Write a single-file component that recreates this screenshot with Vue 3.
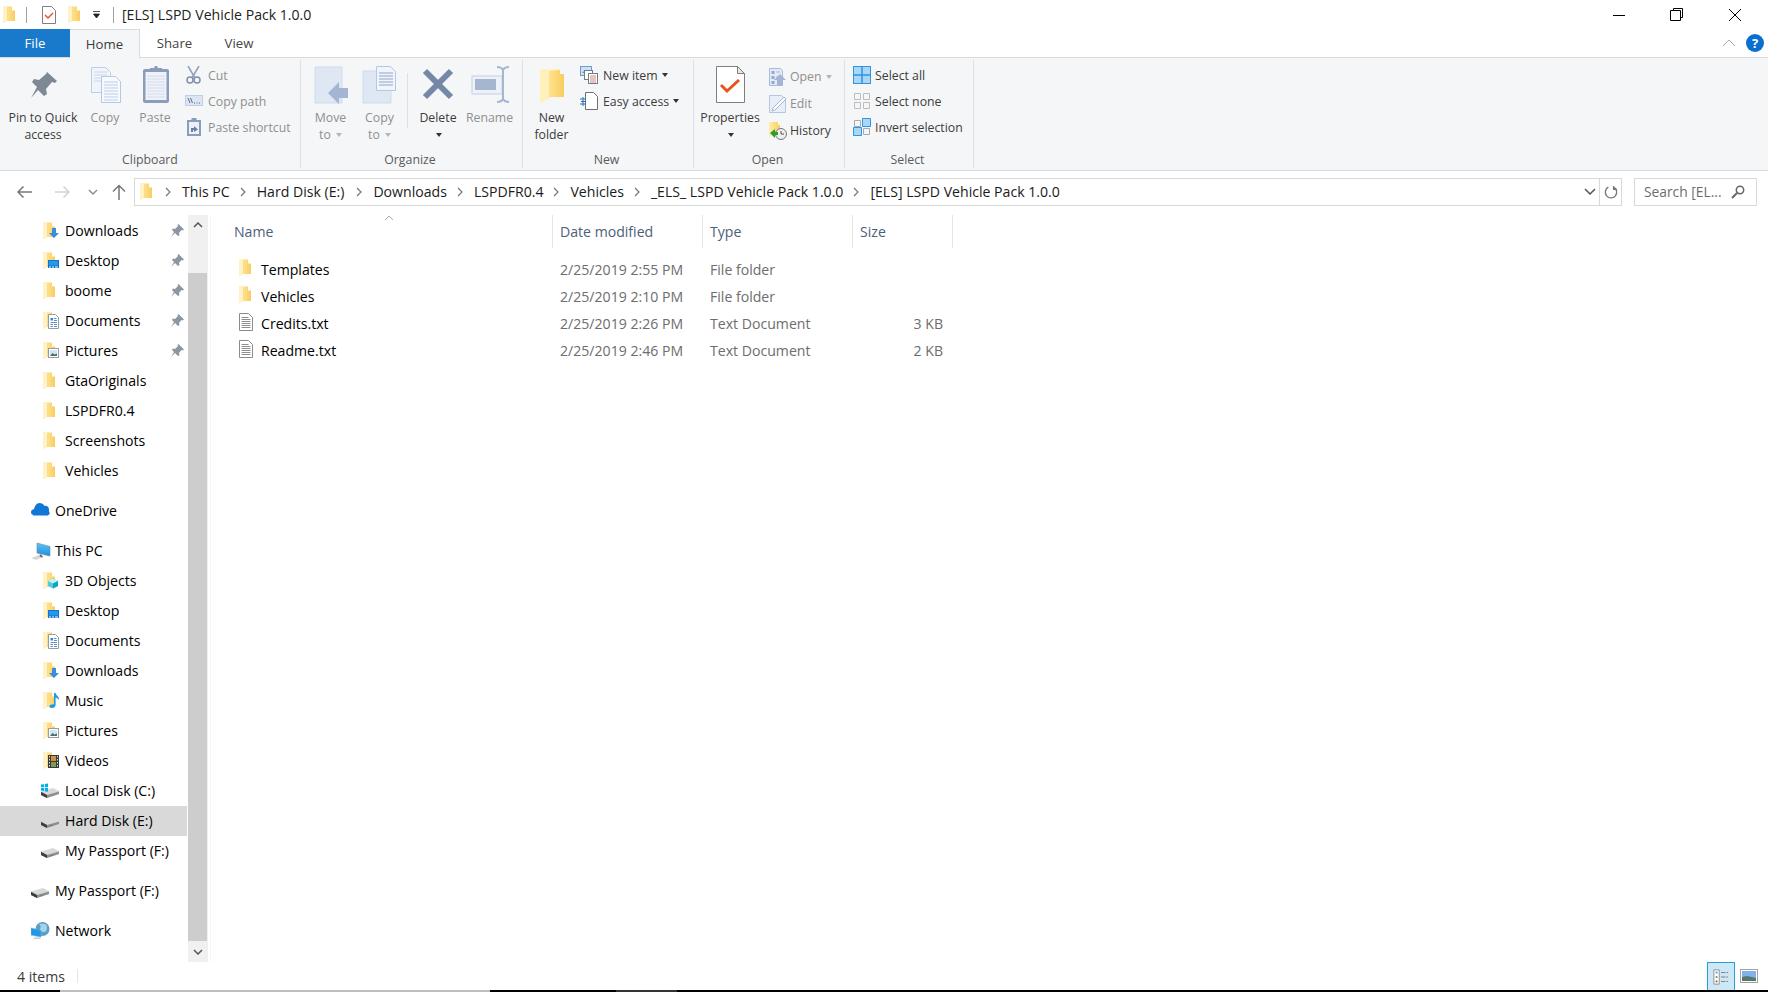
<script setup>
const crumbs = ['This PC', 'Hard Disk (E:)', 'Downloads', 'LSPDFR0.4', 'Vehicles', '_ELS_ LSPD Vehicle Pack 1.0.0', '[ELS] LSPD Vehicle Pack 1.0.0']

const navGroups = [
  {
    items: [
      { name: 'Downloads', over: 'ov-down', pin: true, child: true },
      { name: 'Desktop', over: 'ov-desk', pin: true, child: true },
      { name: 'boome', pin: true, child: true },
      { name: 'Documents', over: 'ov-docs', pin: true, child: true },
      { name: 'Pictures', over: 'ov-pics', pin: true, child: true },
      { name: 'GtaOriginals', child: true },
      { name: 'LSPDFR0.4', child: true },
      { name: 'Screenshots', child: true },
      { name: 'Vehicles', child: true },
    ],
  },
  { items: [{ name: 'OneDrive', icon: 'i-cloud' }] },
  {
    items: [
      { name: 'This PC', icon: 'i-pc' },
      { name: '3D Objects', over: 'ov-3d', child: true },
      { name: 'Desktop', over: 'ov-desk', child: true },
      { name: 'Documents', over: 'ov-docs', child: true },
      { name: 'Downloads', over: 'ov-down', child: true },
      { name: 'Music', over: 'ov-music', child: true },
      { name: 'Pictures', over: 'ov-pics', child: true },
      { name: 'Videos', over: 'ov-video', child: true },
      { name: 'Local Disk (C:)', icon: 'i-cdrive', child: true },
      { name: 'Hard Disk (E:)', icon: 'i-drive', child: true, active: true },
      { name: 'My Passport (F:)', icon: 'i-drive', child: true },
    ],
  },
  { items: [{ name: 'My Passport (F:)', icon: 'i-drive' }] },
  { items: [{ name: 'Network', icon: 'i-net' }] },
]

const files = [
  { name: 'Templates', date: '2/25/2019 2:55 PM', type: 'File folder', size: '', icon: 'i-folder' },
  { name: 'Vehicles', date: '2/25/2019 2:10 PM', type: 'File folder', size: '', icon: 'i-folder' },
  { name: 'Credits.txt', date: '2/25/2019 2:26 PM', type: 'Text Document', size: '3 KB', icon: 'i-txt' },
  { name: 'Readme.txt', date: '2/25/2019 2:46 PM', type: 'Text Document', size: '2 KB', icon: 'i-txt' },
]
</script>

<template>
  <div class="window">
    <!-- shared icons -->
    <svg class="defs" aria-hidden="true">
      <defs>
        <linearGradient id="fold" x1="0" y1="0" x2="1" y2="0">
          <stop offset="0" stop-color="#ffeeb0" />
          <stop offset="0.4" stop-color="#ffe08c" />
          <stop offset="1" stop-color="#f7cd5f" />
        </linearGradient>
        <linearGradient id="screen" x1="0" y1="0" x2="0" y2="1">
          <stop offset="0" stop-color="#5fc4f6" />
          <stop offset="1" stop-color="#1d8fe0" />
        </linearGradient>
      </defs>
      <symbol id="i-folder" viewBox="0 0 20 18">
        <path d="M2 0h9v4.500h3V15H6l-4 2z" fill="url(#fold)" />
        <path d="M2 0h9v.800H6.500V15L2 17z" fill="#fff2c4" />
        <path d="M6 1h1v14H6z" fill="#f3cf78" opacity=".5" />
      </symbol>
      <symbol id="ov-down" viewBox="0 0 20 18">
        <path d="M11 6h4v5h3l-5 5-5-5h3z" fill="#3b8ede" />
      </symbol>
      <symbol id="ov-desk" viewBox="0 0 20 18">
        <rect x="7" y="8" width="11" height="8" fill="#0d74c8" />
        <rect x="8" y="9" width="9" height="4.500" fill="#2299ee" />
        <path d="M8 15h2M11 15h2M14 15h3" stroke="#fff" />
      </symbol>
      <symbol id="ov-docs" viewBox="0 0 20 18">
        <path d="M7.500 2.500h7l3 3v11h-10z" fill="#fff" stroke="#9a9a9a" />
        <path d="M9.500 6h2.500v2.500H9.500z" fill="#2d8ad8" />
        <path d="M13 6.500h2.500M13 8.500h3M9.500 10.500h6.500M9.500 12.500h2.500M13 12.500h3M9.500 14.500h2.500M13 14.500h3" stroke="#5a93c9" />
      </symbol>
      <symbol id="ov-pics" viewBox="0 0 20 18">
        <rect x="7.500" y="6.500" width="10" height="9" fill="#fff" stroke="#9c9c9c" />
        <rect x="9" y="8" width="7" height="6" fill="#cfe4f5" />
        <path d="M9 14l2.500-3 2 1.500 2.500-1v2.500z" fill="#4f7268" />
      </symbol>
      <symbol id="ov-3d" viewBox="0 0 20 18">
        <path d="M7 9l5-2.500L17 9v5l-5 2.500L7 14z" fill="#52cbdc" />
        <path d="M7 9l5 2.500L17 9l-5-2.500z" fill="#c5f1f5" />
        <path d="M12 11.500L17 9v5l-5 2.500z" fill="#0ea6bf" />
      </symbol>
      <symbol id="ov-music" viewBox="0 0 20 18">
        <path d="M13 1h1.600c.4 2.500 3.900 3.500 3.400 7-.8-1.300-2-2.100-3.400-2.500v7.500c0 2-1.800 3-3.600 3S8 15 8.500 14s2.500-2 4.500-1.600z" fill="#1a9ae8" />
      </symbol>
      <symbol id="ov-video" viewBox="0 0 20 18">
        <rect x="7" y="3" width="11" height="13" fill="#3a3a3a" />
        <path d="M8 4h1v1.500H8zM8 7h1v1.500H8zM8 10h1v1.500H8zM8 13h1v1.500H8zM16 4h1v1.500h-1zM16 7h1v1.500h-1zM16 10h1v1.500h-1zM16 13h1v1.500h-1z" fill="#d8d8d8" />
        <rect x="10" y="4" width="5" height="5" fill="#c9963c" />
        <rect x="10" y="10" width="5" height="5" fill="#7f9b53" />
      </symbol>
      <symbol id="i-cloud" viewBox="0 0 20 18">
        <path d="M3 13c-2 0-3-1.400-3-2.800 0-1.900 1.300-2.900 3-3C3.700 4 5.700 1 8.500 1c2.300 0 3.800 1 4.700 2.800 2.800-.4 4.800.9 4.800 4 0 .5 0 .9-.1 1.400 1 .5 1.100 3.800-.9 3.800z" fill="#0f78d4" />
        <path d="M2 13h15" stroke="#0f78d4" />
      </symbol>
      <symbol id="i-pc" viewBox="0 0 20 18">
        <path d="M6 1l13 3.500V14L6 11z" fill="url(#screen)" stroke="#6a8aa0" stroke-width=".6" />
        <path d="M0 16l8-3 5 1.500L5 18z" fill="#d8d8d8" />
        <path d="M9 12v3h3" stroke="#bcbcbc" />
      </symbol>
      <symbol id="i-drive" viewBox="0 0 20 18">
        <path d="M0 9.500L12 6l6 3v3L6 16 0 13z" fill="#d9d9d9" />
        <path d="M0 9.500L6 13l12-3.500V12L6 16 0 13z" fill="#8f8f8f" />
        <path d="M0 10l6 3v3l-6-3z" fill="#3e3e3e" />
        <path d="M9 14l3-1" stroke="#3ea83e" />
      </symbol>
      <symbol id="i-cdrive" viewBox="0 0 20 18">
        <path d="M0 9.500L12 6l6 3v3L6 16 0 13z" fill="#d9d9d9" />
        <path d="M0 9.500L6 13l12-3.500V12L6 16 0 13z" fill="#8f8f8f" />
        <path d="M0 10l6 3v3l-6-3z" fill="#3e3e3e" />
        <path d="M0 2.600L3 2.200v3H0zM3.800 2L7 1.500v3.700H3.800zM0 6h3v3L0 8.600zM3.800 6H7v3.800L3.800 9.200z" fill="#00adef" />
      </symbol>
      <symbol id="i-net" viewBox="0 0 20 18">
        <circle cx="11.500" cy="7" r="7" fill="#5a9fc9" />
        <path d="M8 2c2 2 2 3 1 5s2 3 4 3 3-2 3-5-2-4-8-3z" fill="#a9d2e8" />
        <path d="M0 6l10 2.500V15L0 13z" fill="#1d9be8" stroke="#68a9d2" stroke-width=".6" />
        <path d="M3 15.500h6l1 1.500H3z" fill="#c9c9c9" />
      </symbol>
      <symbol id="i-txt" viewBox="0 0 20 18">
        <path d="M2.500.500h9l4 4v13h-13z" fill="#fff" stroke="#8b8b8b" />
        <path d="M4.500 4.500h7M4.500 6.500h9M4.500 8.500h9M4.500 10.500h9M4.500 12.500h9M4.500 14.500h9" stroke="#8e8e8e" />
      </symbol>
      <symbol id="i-pin" viewBox="0 0 14 14">
        <path d="M8.500 0L14 5.500l-1.500 1-1-.5L9 9l.5 2L8 12 5 9 1 13l3-5-2-2 1-1.500 2 .5L8 2l-.5-1z" fill="#8b96a3" />
      </symbol>
      <symbol id="r-pin" viewBox="0 0 40 40">
        <path d="M24 7l10 9-2 2-3-1-6 7 1 5-3 2-6-6-7 8 6-11-5-5 2-3 5 1 7-6z" fill="#7f8996" />
      </symbol>
      <symbol id="r-copy" viewBox="0 0 40 40">
        <path d="M6.500 2.500h14l5 5v20h-19z" fill="#f1f5fb" stroke="#bccde6" />
        <path d="M9 7h13M9 10h13M9 13h13M9 16h8" stroke="#c8d6ea" />
        <path d="M16.500 11.500h14l5 5v21H16.500z" fill="#f6f9fd" stroke="#b4c7e3" />
        <path d="M19 17h14M19 20h14M19 23h14M19 26h14M19 29h14M19 32h14M19 35h14" stroke="#bccde6" />
      </symbol>
      <symbol id="r-paste" viewBox="0 0 40 40">
        <rect x="8" y="4" width="26" height="34" rx="2" fill="#8b9dbd" />
        <rect x="10.500" y="7" width="21" height="28" fill="#eff2f8" />
        <path d="M12 11h18M12 14h18M12 17h18M12 20h18M12 23h18M12 26h18M12 29h18M12 32h18" stroke="#d4dcea" />
        <path d="M15 3h4l1-2h2l1 2h4v4H15z" fill="#8b9dbd" />
      </symbol>
      <symbol id="r-move" viewBox="0 0 40 40">
        <path d="M4 2h27v36H4z" fill="#dfe7f5" stroke="#cfdbef" />
        <path d="M17 28l11-11v6h9v10h-9v6z" fill="#a3b5d3" />
      </symbol>
      <symbol id="r-copyto" viewBox="0 0 40 40">
        <path d="M3 6h28v32H3z" fill="#dfe7f5" stroke="#cfdbef" />
        <path d="M16.500 1.500h14l5 5v19h-19z" fill="#f1f5fb" stroke="#b4c7e3" />
        <path d="M19 8h14M19 11h14M19 14h14M19 17h14M19 20h14" stroke="#8da5cb" />
      </symbol>
      <symbol id="r-delete" viewBox="0 0 40 40">
        <path d="M7 6l26 26M33 6L7 32" stroke="#7587a6" stroke-width="6" />
      </symbol>
      <symbol id="r-rename" viewBox="0 0 40 40">
        <rect x="2" y="11" width="30" height="18" fill="#eef2f8" stroke="#c3d0e5" />
        <rect x="5" y="14" width="21" height="11" fill="#a6b6d1" />
        <path d="M27 2c4 0 5 1 6 3 1-2 2-3 6-3M33 5v29M27 37c4 0 5-1 6-3 1 2 2 3 6 3" fill="none" stroke="#a6b6d1" stroke-width="2" />
      </symbol>
      <symbol id="r-folder" viewBox="0 0 40 40">
        <path d="M8 4h20v5h4v23H19l-11 6z" fill="url(#fold)" />
        <path d="M8 4h20v1l-11 1v27L8 38z" fill="#fff0bc" />
      </symbol>
      <symbol id="r-props" viewBox="0 0 40 40">
        <path d="M6.500 1.500h21l7 7v29h-28z" fill="#fff" stroke="#7f7f7f" />
        <path d="M27.500 1.500v7h7z" fill="#e6e6e6" stroke="#7f7f7f" />
        <path d="M11 20l6 6 12-11" fill="none" stroke="#e8531f" stroke-width="3" />
      </symbol>
      <symbol id="s-cut" viewBox="0 0 18 18">
        <path d="M3 0l7 12M14 0L7 12" stroke="#8ea0bd" stroke-width="1.500" />
        <circle cx="5" cy="14" r="3" fill="none" stroke="#7e90ae" stroke-width="1.500" />
        <circle cx="12" cy="14" r="3" fill="none" stroke="#7e90ae" stroke-width="1.500" />
      </symbol>
      <symbol id="s-path" viewBox="0 0 18 18">
        <rect x=".500" y="3.500" width="17" height="10" fill="#dbe5f4" stroke="#c0cfe6" />
        <path d="M3 6l2 5M5.500 6l2 5" stroke="#56657d" stroke-width=".9" />
        <path d="M9 11h1M11.500 11h1M14 11h1" stroke="#56657d" />
      </symbol>
      <symbol id="s-shortcut" viewBox="0 0 18 18">
        <rect x="2" y="2" width="14" height="16" fill="#8b9dbd" />
        <rect x="4" y="4" width="10" height="12" fill="#eef2f8" />
        <path d="M6.500 0h5v3h-5z" fill="#8b9dbd" />
        <path d="M6 14V10h3V8l4 3.500L9 14v-2H8v2z" fill="#6d7f9f" />
      </symbol>
      <symbol id="s-new" viewBox="0 0 18 18">
        <rect x=".500" y=".500" width="11" height="9" fill="#cfe0f5" stroke="#6f9ccc" />
        <path d="M2 7l3-3 4 3" fill="#7d9c70" />
        <rect x="4.500" y="4.500" width="8" height="9" fill="#fff" stroke="#6f7c8b" />
        <rect x="8.500" y="7.500" width="9" height="10" fill="#fff" stroke="#6f7c8b" />
        <path d="M10 10h6M10 12h6M10 14h6M10 16h6" stroke="#d38a72" />
      </symbol>
      <symbol id="s-easy" viewBox="0 0 18 18">
        <path d="M5.500.500h8l4 4v13h-12z" fill="#fff" stroke="#6f6f6f" />
        <path d="M0 7h6M1 9.500h5M0 12h6M3 5v9" stroke="#2e70b8" />
      </symbol>
      <symbol id="s-open" viewBox="0 0 18 18">
        <path d="M.500.500h11l2 2v15H.500z" fill="#e3eaf6" stroke="#a9bbd7" />
        <path d="M2.500 3h3v3h-3zM2.500 8h3v3h-3zM2.500 13h3v3h-3z" fill="#95a9cb" />
        <path d="M7 4h4M7 9h3" stroke="#a9bbd7" />
        <path d="M8 17v-5H5l6-6 6 6h-3v5z" fill="#a3b5d3" />
      </symbol>
      <symbol id="s-edit" viewBox="0 0 18 18">
        <path d="M.500.500h12l4 4v13H.500z" fill="#e9eff8" stroke="#b4c6e0" />
        <path d="M15 2L4 13l-1 3 3-1L17 4z" fill="#fff" stroke="#a3b5d3" />
      </symbol>
      <symbol id="s-history" viewBox="0 0 18 18">
        <path d="M0 0h9v3h2v9H3L0 16z" fill="url(#fold)" />
        <circle cx="12" cy="12" r="5.500" fill="#eee" stroke="#777" />
        <path d="M12 9v3h3" stroke="#555" fill="none" />
        <path d="M1 11l5-4v3h3v3H6v3z" fill="#2aa02a" />
      </symbol>
      <symbol id="s-all" viewBox="0 0 18 18">
        <rect x=".500" y=".500" width="17" height="17" fill="#a9d7f7" stroke="#2f95e2" />
        <path d="M9 0v18M0 9h18" stroke="#2f95e2" stroke-width="1.500" />
      </symbol>
      <symbol id="s-none" viewBox="0 0 18 18">
        <path d="M1.500 1.500h6v6h-6zM10.500 1.500h6v6h-6zM1.500 10.500h6v6h-6zM10.500 10.500h6v6h-6z" fill="none" stroke="#bdbdbd" />
      </symbol>
      <symbol id="s-invert" viewBox="0 0 18 18">
        <path d="M1.500 2.500h6v6h-6zM10.500 10.500h6v6h-6z" fill="none" stroke="#aaa" />
        <path d="M9.500.500h8v8h-8zM.500 9.500h8v8h-8z" fill="#a9d7f7" stroke="#2f95e2" />
      </symbol>
      <symbol id="t-check" viewBox="0 0 16 18">
        <path d="M1.500.500h9l4 4v13h-13z" fill="#fff" stroke="#7f7f7f" />
        <path d="M4 9l3 3 5-5" fill="none" stroke="#e8531f" stroke-width="1.500" />
      </symbol>
    </svg>

    <header class="titlebar">
      <svg class="i16"><use href="#i-folder" /></svg>
      <span class="tsep"></span>
      <svg class="tcheck"><use href="#t-check" /></svg>
      <svg class="i16 tfold"><use href="#i-folder" /></svg>
      <svg class="tdrop" viewBox="0 0 9 8"><path d="M1 .5h7M1.500 3h6L4.500 7z" stroke="#222" fill="#222" stroke-width=".8" /></svg>
      <span class="tsep tsep2"></span>
      <span class="ttext">[ELS] LSPD Vehicle Pack 1.0.0</span>
      <div class="wincontrols">
        <svg viewBox="0 0 58 14"><path d="M1 7.500h12" stroke="#000" /></svg>
        <svg viewBox="0 0 58 14"><path d="M3.500 2.500v-2h9v9h-2M.500 2.500h10v10H.500z" fill="none" stroke="#000" /></svg>
        <svg viewBox="0 0 14 14" class="close"><path d="M1 1l12 12M13 1L1 13" stroke="#000" /></svg>
      </div>
    </header>

    <nav class="tabs">
      <div class="tab file">File</div>
      <div class="tab home">Home</div>
      <div class="tab">Share</div>
      <div class="tab view">View</div>
      <div class="tab-right">
        <svg class="collapse" viewBox="0 0 14 8"><path d="M1 7l6-6 6 6" fill="none" stroke="#a8a8a8" /></svg>
        <span class="help">?</span>
      </div>
    </nav>

    <section class="ribbon">
      <div class="group g-clip">
        <div class="group-body">
          <div class="big w-pin"><svg class="big-ic"><use href="#r-pin" /></svg><span>Pin to Quick<br />access</span></div>
          <div class="big off w-copy"><svg class="big-ic"><use href="#r-copy" /></svg><span>Copy</span></div>
          <div class="big off w-paste"><svg class="big-ic"><use href="#r-paste" /></svg><span>Paste</span></div>
          <div class="smalls off">
            <div class="small"><svg><use href="#s-cut" /></svg>Cut</div>
            <div class="small"><svg><use href="#s-path" /></svg>Copy path</div>
            <div class="small"><svg><use href="#s-shortcut" /></svg>Paste shortcut</div>
          </div>
        </div>
        <div class="group-label">Clipboard</div>
      </div>
      <div class="group g-org">
        <div class="group-body">
          <div class="big off w-move"><svg class="big-ic"><use href="#r-move" /></svg><span>Move<br />to <i class="caret"></i></span></div>
          <div class="big off w-move"><svg class="big-ic"><use href="#r-copyto" /></svg><span>Copy<br />to <i class="caret"></i></span></div>
          <span class="mini-sep"></span>
          <div class="big w-del"><svg class="big-ic"><use href="#r-delete" /></svg><span>Delete<br /><i class="caret dark"></i></span></div>
          <div class="big off w-ren"><svg class="big-ic"><use href="#r-rename" /></svg><span>Rename</span></div>
        </div>
        <div class="group-label">Organize</div>
      </div>
      <div class="group g-new">
        <div class="group-body">
          <div class="big w-fold"><svg class="big-ic"><use href="#r-folder" /></svg><span>New<br />folder</span></div>
          <div class="smalls">
            <div class="small"><svg><use href="#s-new" /></svg>New item <i class="caret dark"></i></div>
            <div class="small"><svg><use href="#s-easy" /></svg>Easy access <i class="caret dark"></i></div>
          </div>
        </div>
        <div class="group-label">New</div>
      </div>
      <div class="group g-open">
        <div class="group-body">
          <div class="big w-props"><svg class="big-ic"><use href="#r-props" /></svg><span>Properties<br /><i class="caret dark"></i></span></div>
          <div class="smalls s-open">
            <div class="small off"><svg><use href="#s-open" /></svg>Open <i class="caret"></i></div>
            <div class="small off"><svg><use href="#s-edit" /></svg>Edit</div>
            <div class="small"><svg><use href="#s-history" /></svg>History</div>
          </div>
        </div>
        <div class="group-label">Open</div>
      </div>
      <div class="group g-sel">
        <div class="group-body">
          <div class="smalls s-sel">
            <div class="small"><svg><use href="#s-all" /></svg>Select all</div>
            <div class="small"><svg><use href="#s-none" /></svg>Select none</div>
            <div class="small"><svg><use href="#s-invert" /></svg>Invert selection</div>
          </div>
        </div>
        <div class="group-label">Select</div>
      </div>
    </section>

    <div class="addressrow">
      <div class="navbtns">
        <svg class="back" viewBox="0 0 16 14"><path d="M16 7H2M7.500 1.500L2 7l5.500 5.500" fill="none" stroke="#777" stroke-width="1.500" /></svg>
        <svg class="fwd" viewBox="0 0 16 14"><path d="M0 7h14M8.500 1.500L14 7l-5.500 5.500" fill="none" stroke="#d4d4d4" stroke-width="1.500" /></svg>
        <svg class="recent" viewBox="0 0 10 6"><path d="M1 1l4 4 4-4" fill="none" stroke="#8a8a8a" stroke-width="1.400" /></svg>
        <svg class="up" viewBox="0 0 14 16"><path d="M7 16V2M1 7.500L7 1.500l6 6" fill="none" stroke="#777" stroke-width="1.500" /></svg>
      </div>
      <div class="addressbox">
        <svg class="addr-folder"><use href="#i-folder" /></svg>
        <template v-for="c in crumbs" :key="c">
          <svg class="chev" viewBox="0 0 6 10"><path d="M1 1l4 4-4 4" fill="none" stroke="#777" stroke-width="1.200" /></svg>
          <span class="crumb">{{ c }}</span>
        </template>
        <svg class="addr-drop" viewBox="0 0 12 7"><path d="M1 1l5 5 5-5" fill="none" stroke="#555" stroke-width="1.500" /></svg>
        <span class="addr-refresh">
          <svg viewBox="0 0 16 16"><path d="M5 2.500a6.500 6.500 0 1 0 6 0M11 1v4h4" fill="none" stroke="#777" stroke-width="1.500" /></svg>
        </span>
      </div>
      <div class="searchbox">
        <span>Search [EL...</span>
        <svg viewBox="0 0 14 14"><circle cx="9" cy="5" r="3.700" fill="none" stroke="#666" stroke-width="1.500" /><path d="M6 8l-5 5" stroke="#666" stroke-width="2" /></svg>
      </div>
    </div>

    <main class="main">
      <aside class="sidebar">
        <div v-for="(g, gi) in navGroups" :key="gi" class="navgroup">
          <div
            v-for="item in g.items"
            :key="item.name"
            class="navrow"
            :class="{ child: item.child, active: item.active }"
          >
            <svg class="navicon" viewBox="0 0 20 18">
              <template v-if="item.icon"><use :href="'#' + item.icon" /></template>
              <template v-else>
                <use href="#i-folder" />
                <use v-if="item.over" :href="'#' + item.over" />
              </template>
            </svg>
            <span class="navname">{{ item.name }}</span>
            <svg v-if="item.pin" class="navpin"><use href="#i-pin" /></svg>
          </div>
        </div>
      </aside>

      <div class="scrollbar">
        <div class="sb-btn top">
          <svg viewBox="0 0 10 6"><path d="M1 5l4-4 4 4" fill="none" stroke="#555" stroke-width="1.500" /></svg>
        </div>
        <div class="sb-thumb"></div>
        <div class="sb-btn">
          <svg viewBox="0 0 10 6"><path d="M1 1l4 4 4-4" fill="none" stroke="#555" stroke-width="1.500" /></svg>
        </div>
      </div>

      <section class="content">
        <div class="headrow">
          <div class="hcell">
            Name
            <svg class="sort" viewBox="0 0 10 6"><path d="M1 5l4-4 4 4" fill="none" stroke="#aaa" /></svg>
          </div>
          <div class="hcell">Date modified</div>
          <div class="hcell">Type</div>
          <div class="hcell">Size</div>
        </div>
        <div v-for="f in files" :key="f.name" class="filerow">
          <div class="fname">
            <svg viewBox="0 0 20 18"><use :href="'#' + f.icon" /></svg>
            {{ f.name }}
          </div>
          <div class="fmeta">{{ f.date }}</div>
          <div class="fmeta">{{ f.type }}</div>
          <div class="fmeta fsize">{{ f.size }}</div>
        </div>
      </section>
    </main>

    <footer class="statusbar">
      <span class="count">4 items</span>
      <span class="status-sep"></span>
      <div class="viewbtns">
        <div class="vbtn on">
          <svg viewBox="0 0 18 18">
            <path d="M1 1h6v16H1z" fill="#fff" stroke="#8a8a8a" />
            <path d="M3 3h2v2H3z" fill="#6a8aa8" /><path d="M3 8h2v2H3z" fill="#7b8a4a" /><path d="M3 13h2v2H3z" fill="#b04a2a" />
            <path d="M9 4h5M15 4h2M9 9h5M15 9h2M9 14h5M15 14h2" stroke="#777" />
          </svg>
        </div>
        <div class="vbtn">
          <svg viewBox="0 0 18 14">
            <rect x=".500" y=".500" width="17" height="13" fill="#fff" stroke="#a3a3a3" />
            <rect x="2" y="2" width="14" height="10" fill="#7fb2e8" />
            <path d="M2 8l5-1 9 2v3H2z" fill="#55786a" />
          </svg>
        </div>
      </div>
    </footer>
    <div class="edge">
      <span class="e1"></span>
      <span class="e2"></span>
      <span class="e3"></span>
      <span class="e4"></span>
      <span class="e5"></span>
    </div>
  </div>
</template>

<style scoped>
.window {
  width: 1768px;
  height: 992px;
  display: flex;
  flex-direction: column;
  background: #fff;
  font-family: "Open Sans", "Noto Sans", sans-serif;
  font-size: 14.1px;
  color: #000;
  overflow: hidden;
}

.defs {
  width: 0;
  height: 0;
  position: absolute;
}

svg {
  display: block;
  flex: none;
}

/* title bar */
.titlebar {
  height: 29px;
  display: flex;
  align-items: center;
  padding-left: 1px;
}

.i16 {
  width: 20px;
  height: 18px;
}

.tsep {
  width: 1px;
  height: 16px;
  background: #a0a0a0;
  margin-left: 5px;
}

.tcheck {
  width: 16px;
  height: 18px;
  margin-left: 14px;
}

.tfold {
  margin-left: 9px;
}

.tdrop {
  width: 9px;
  height: 8px;
  margin-left: 6px;
}

.tsep2 {
  margin-left: 12px;
}

.ttext {
  margin-left: 8px;
  color: #222;
}

.wincontrols {
  margin-left: auto;
  display: flex;
  align-items: center;
  margin-right: 26px;
}

.wincontrols svg {
  width: 58px;
  height: 14px;
}

.wincontrols .close {
  width: 14px;
}

/* tabs */
.tabs {
  height: 28px;
  display: flex;
  align-items: stretch;
  font-size: 13.2px;
  color: #444;
}

.tab {
  width: 69px;
  display: flex;
  align-items: center;
  justify-content: center;
}

.tab.file {
  width: 70px;
  background: #1979ca;
  color: #fff;
}

.tab.home {
  background: #f5f6f7;
  border: 1px solid #dadbdc;
  border-bottom: none;
  border-left: none;
  margin-bottom: -1px;
  position: relative;
  z-index: 1;
  color: #3b3b3b;
}

.tab.view {
  width: 60px;
}

.tab-right {
  margin-left: auto;
  display: flex;
  align-items: center;
  padding-right: 4px;
}

.collapse {
  width: 14px;
  height: 8px;
  margin-right: 10px;
}

.help {
  width: 18px;
  height: 18px;
  border-radius: 50%;
  background: #0a6fcf;
  color: #fff;
  font-size: 13px;
  font-weight: 700;
  line-height: 18px;
  text-align: center;
}

/* ribbon */
.ribbon {
  height: 114px;
  box-sizing: border-box;
  background: #f5f6f7;
  border-top: 1px solid #dadbdc;
  border-bottom: 1px solid #dadbdc;
  display: flex;
  color: #3c3c3c;
  font-size: 12.3px;
}

.group {
  box-sizing: border-box;
  display: flex;
  flex-direction: column;
  border-right: 1px solid #dfe0e1;
  margin: 2px 0;
  padding-top: 5px;
}

.g-clip { width: 301px; }
.g-org { width: 222px; }
.g-new { width: 171px; }
.g-open { width: 151px; }
.g-sel { width: 129px; }

.group-body {
  flex: 1;
  display: flex;
  min-height: 0;
}

.group-label {
  text-align: center;
  color: #5b5b5b;
  height: 17px;
  line-height: 17px;
  padding-right: 3px;
}

.g-clip .group-label {
  padding-right: 0;
}

.big {
  display: flex;
  flex-direction: column;
  align-items: center;
  text-align: center;
  line-height: 17px;
}

.big-ic {
  width: 40px;
  height: 40px;
  margin-bottom: 4px;
}

.off {
  color: #8f8f8f;
}

.w-pin { width: 86px; }
.w-copy { width: 38px; }
.w-paste { width: 62px; }
.w-move { width: 49px; }
.w-del { width: 50px; }
.w-ren { width: 53px; }
.w-fold { width: 57px; }
.w-props { width: 74px; }

.g-org .group-body { padding-left: 5px; }
.g-open .group-body { padding-left: 0; margin-left: -1px; }

.mini-sep {
  width: 1px;
  height: 55px;
  background: #dfe0e1;
  margin: 8px 5px 0 3px;
}

.smalls {
  display: flex;
  flex-direction: column;
  margin-top: -3px;
}

.small {
  height: 26px;
  display: flex;
  align-items: center;
}

.small svg {
  width: 18px;
  height: 18px;
  margin-right: 5px;
}

.small .caret {
  margin-left: 4px;
}

.g-clip .smalls { margin-left: -1px; }
.s-open { margin-top: -2px; margin-left: 2px; }
.s-open .small { height: 27px; }
.s-open svg { margin-right: 3px; }
.s-sel { margin-left: 8px; }
.s-sel svg { margin-right: 4px; }

.caret {
  display: inline-block;
  width: 0;
  height: 0;
  border: 3.5px solid transparent;
  border-top: 4px solid #b6b6b6;
  border-bottom: none;
  vertical-align: 2px;
  margin-left: 2px;
}

.caret.dark {
  border-top-color: #333;
}

/* address row */
.addressrow {
  height: 44px;
  display: flex;
  align-items: center;
  padding-bottom: 3px;
  box-sizing: border-box;
}

.navbtns {
  width: 134px;
  display: flex;
  align-items: center;
}

.back {
  width: 16px;
  height: 14px;
  margin-left: 16px;
}

.fwd {
  width: 16px;
  height: 14px;
  margin-left: 23px;
}

.recent {
  width: 10px;
  height: 6px;
  margin-left: 17px;
}

.up {
  width: 14px;
  height: 16px;
  margin-left: 14px;
}

.addressbox {
  width: 1488px;
  height: 28px;
  box-sizing: border-box;
  border: 1px solid #d9d9d9;
  display: flex;
  align-items: center;
  color: #1a1a1a;
}

.addr-folder {
  width: 20px;
  height: 18px;
  margin-left: 3px;
  margin-right: -3px;
}

.chev {
  width: 6px;
  height: 10px;
  margin: 0 11px 0 10px;
}

.crumb:nth-of-type(2) {
  padding-right: 2px;
}

.addr-drop {
  width: 12px;
  height: 7px;
  margin-left: auto;
  margin-right: 3px;
}

.addr-refresh {
  width: 21px;
  height: 26px;
  border-left: 1px solid #d9d9d9;
  display: flex;
  align-items: center;
  justify-content: center;
}

.addr-refresh svg {
  width: 14px;
  height: 14px;
}

.searchbox {
  margin-left: 12px;
  width: 123px;
  height: 28px;
  box-sizing: border-box;
  border: 1px solid #d9d9d9;
  display: flex;
  align-items: center;
  justify-content: space-between;
  padding: 0 11px 0 9px;
  color: #6d6d6d;
  font-size: 13.8px;
}

.searchbox svg {
  width: 14px;
  height: 14px;
}

/* main area */
.main {
  flex: 1;
  min-height: 0;
  display: flex;
}

.sidebar {
  width: 188px;
  padding-top: 1px;
}

.navgroup {
  margin-bottom: 10px;
}

.navrow {
  height: 30px;
  display: flex;
  align-items: center;
  padding-left: 31px;
  position: relative;
}

.navrow.child {
  padding-left: 41px;
}

.navrow.active {
  background: #d9d9d9;
  margin-right: 1px;
}

.navicon {
  width: 20px;
  height: 18px;
  margin-right: 4px;
}

.navname {
  color: #000;
  padding-bottom: 2px;
}

.navpin {
  position: absolute;
  left: 170px;
  top: 8px;
  width: 14px;
  height: 14px;
}

.scrollbar {
  width: 20px;
  display: flex;
  flex-direction: column;
  background: #f0f0f0;
}

.sb-btn {
  height: 21px;
  display: flex;
  justify-content: center;
  align-items: center;
}

.sb-btn.top {
  height: 58px;
  align-items: flex-start;
  padding-top: 7px;
  box-sizing: border-box;
}

.sb-btn svg {
  width: 10px;
  height: 6px;
}

.sb-thumb {
  flex: 1;
  background: #cdcdcd;
  margin-right: 1px;
}

.content {
  flex: 1;
  margin-left: 2px;
  border-left: 1px solid #f4f4f4;
  padding-left: 16px;
}

.headrow {
  display: grid;
  grid-template-columns: 326px 150px 150px 100px;
  height: 32px;
  margin-bottom: 9px;
}

.hcell {
  padding-left: 7px;
  border-right: 1px solid #e5e5e5;
  line-height: 33px;
  color: #4c607a;
  position: relative;
  box-sizing: border-box;
}

.sort {
  position: absolute;
  left: 157px;
  top: 0;
  width: 10px;
  height: 6px;
}

.filerow {
  display: grid;
  grid-template-columns: 326px 150px 150px 100px;
  height: 27px;
  align-items: center;
}

.fname {
  display: flex;
  align-items: center;
  padding-left: 10px;
}

.fname svg {
  width: 20px;
  height: 18px;
  margin-right: 4px;
  margin-top: -3px;
}

.fmeta {
  padding-left: 7px;
  color: #6d6d6d;
}

.fsize {
  text-align: right;
  padding-right: 10px;
}

/* status bar */
.statusbar {
  height: 28px;
  flex: none;
  display: flex;
  align-items: center;
  color: #3a3a3a;
}

.count {
  margin-left: 17px;
}

.status-sep {
  width: 1px;
  height: 14px;
  background: #e5e5e5;
  margin-left: 12px;
}

.viewbtns {
  margin-left: auto;
  display: flex;
  align-items: center;
  margin-right: 5px;
}

.vbtn {
  width: 28px;
  height: 28px;
  box-sizing: border-box;
  display: flex;
  align-items: center;
  justify-content: center;
}

.vbtn.on {
  background: #cce8f7;
  border: 1px solid #26a0da;
  border-bottom: none;
}

.vbtn svg {
  width: 18px;
  height: 16px;
}

/* what is left of the taskbar under the window */
.edge {
  height: 2px;
  flex: none;
  display: flex;
  background: #000;
}

.e1 { width: 60px; }
.e2 { width: 430px; background: #bdbdbd; }
.e3 { width: 126px; }
.e4 { width: 61px; background: #333; }
.e5 { flex: 1; }
</style>

<style>
html,
body {
  margin: 0;
  background: #fff;
}
</style>
